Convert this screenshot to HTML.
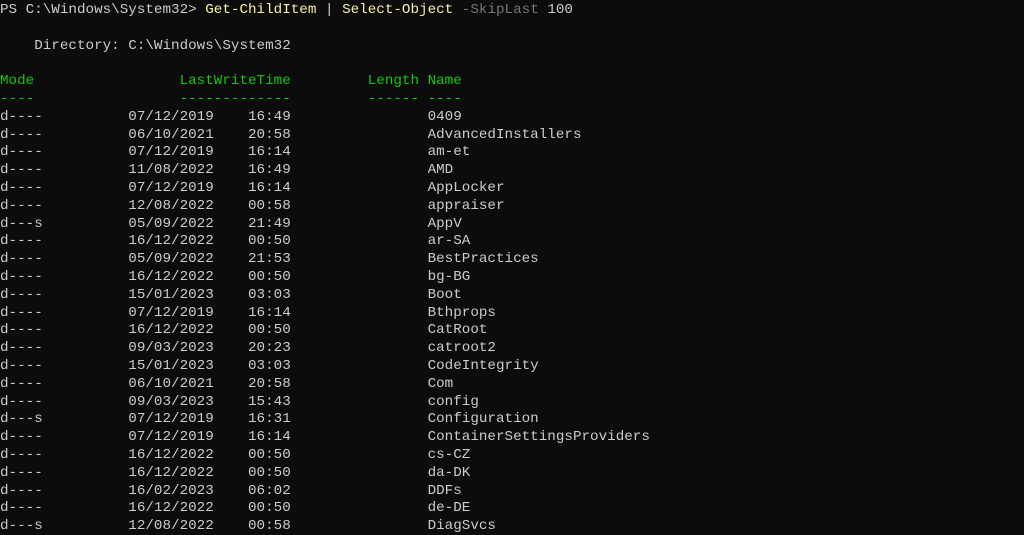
<!DOCTYPE html>
<html><head><meta charset="utf-8"><style>
html,body{margin:0;padding:0;background:#0c0c0c;width:1024px;height:535px;overflow:hidden}
pre{margin:0;padding:2px 0 0 0;font-family:"Liberation Mono",monospace;font-size:14.25px;line-height:17.8px;color:#cccccc;white-space:pre}
.y{color:#f9f1a5}.g{color:#767676}.gr{color:#16c60c}
</style></head><body><pre>PS C:\Windows\System32&gt; <span class="y">Get-ChildItem</span> | <span class="y">Select-Object</span> <span class="g">-SkipLast</span> 100

    Directory: C:\Windows\System32

<span class="gr">Mode                 LastWriteTime         Length Name</span>
<span class="gr">----                 -------------         ------ ----</span>
d----          07/12/2019    16:49                0409
d----          06/10/2021    20:58                AdvancedInstallers
d----          07/12/2019    16:14                am-et
d----          11/08/2022    16:49                AMD
d----          07/12/2019    16:14                AppLocker
d----          12/08/2022    00:58                appraiser
d---s          05/09/2022    21:49                AppV
d----          16/12/2022    00:50                ar-SA
d----          05/09/2022    21:53                BestPractices
d----          16/12/2022    00:50                bg-BG
d----          15/01/2023    03:03                Boot
d----          07/12/2019    16:14                Bthprops
d----          16/12/2022    00:50                CatRoot
d----          09/03/2023    20:23                catroot2
d----          15/01/2023    03:03                CodeIntegrity
d----          06/10/2021    20:58                Com
d----          09/03/2023    15:43                config
d---s          07/12/2019    16:31                Configuration
d----          07/12/2019    16:14                ContainerSettingsProviders
d----          16/12/2022    00:50                cs-CZ
d----          16/12/2022    00:50                da-DK
d----          16/02/2023    06:02                DDFs
d----          16/12/2022    00:50                de-DE
d---s          12/08/2022    00:58                DiagSvcs
</pre></body></html>
